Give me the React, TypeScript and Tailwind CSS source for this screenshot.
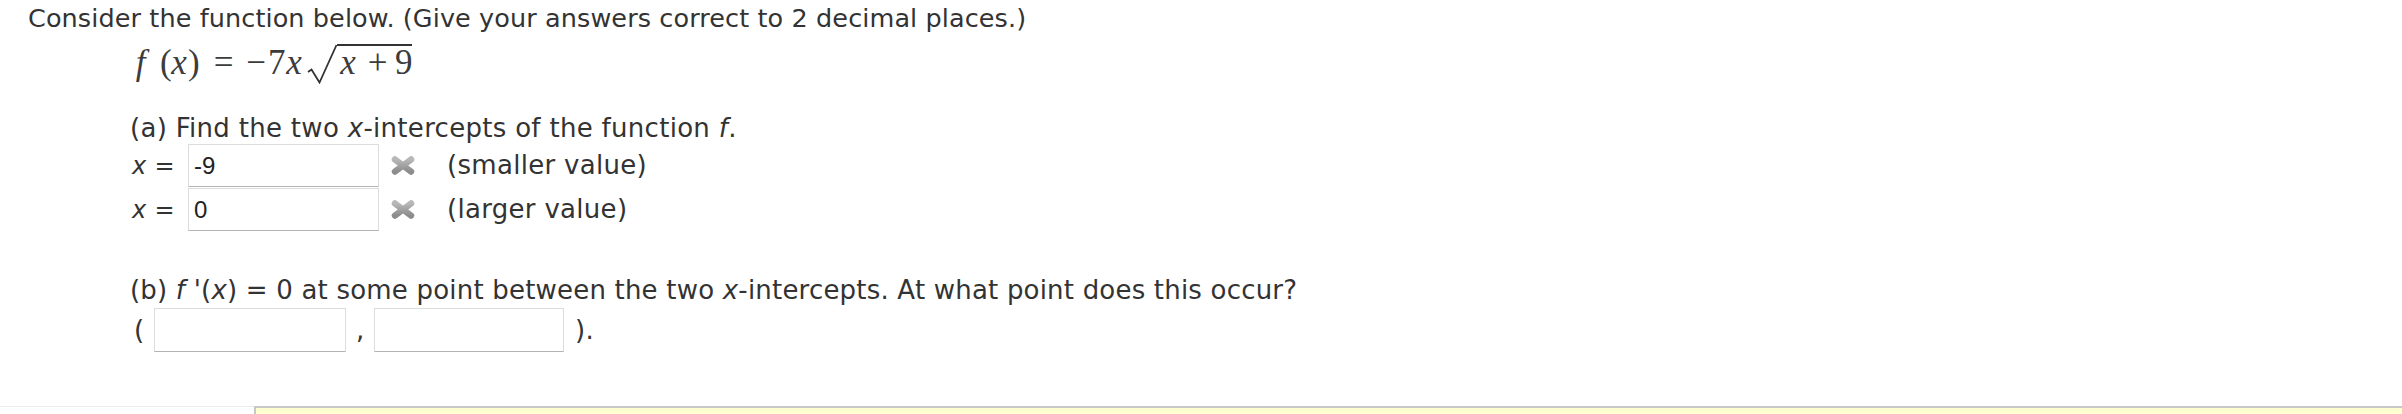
import React from 'react';

const sans = { fontFamily: 'Verdana, "DejaVu Sans", sans-serif' };

const WrongMark: React.FC = () => (
  <svg width="26" height="21" viewBox="0 0 26 21" className="block shrink-0">
    <defs>
      <linearGradient id="xg" x1="0" y1="0" x2="0" y2="1">
        <stop offset="0" stopColor="#b8b8b8" />
        <stop offset="1" stopColor="#8c8c8c" />
      </linearGradient>
    </defs>
    <path
      d="M5 4.5 L21 16.5 M21 4.5 L5 16.5"
      stroke="url(#xg)"
      strokeWidth="6.5"
      strokeLinecap="round"
      fill="none"
    />
  </svg>
);

const AnswerBox: React.FC<{ value?: string; w: string }> = ({ value, w }) => (
  <div
    className={`${w} h-full border border-[#dcdcdc] border-b-[#b4b4b4] bg-white flex items-center pl-[5px] text-[24px] tracking-normal text-[#222]`}
    style={{ fontFamily: '"Liberation Sans", Arial, sans-serif' }}
  >
    {value}
  </div>
);

// f(x) = -7x sqrt(x + 9), set glyph by glyph like the typeset image
const Formula: React.FC = () => (
  <div
    className="flex items-start h-[40px] text-[35px] leading-[34px] text-[#3c3c3c]"
    style={{ fontFamily: '"Liberation Serif", "Times New Roman", serif' }}
  >
    <span className="w-[15px] italic text-center">f</span>
    <span className="ml-[12px] w-[10px] text-center">(</span>
    <span className="w-[18px] italic text-center">x</span>
    <span className="w-[10px] text-center">)</span>
    <span className="ml-[14px] w-[23px] text-center">=</span>
    <span className="ml-[10px] w-[22px] text-center">−</span>
    <span className="ml-[1px] w-[14px] text-center">7</span>
    <span className="ml-[1px] w-[22px] italic text-center">x</span>
    <svg width="30" height="40" viewBox="0 0 30 40" className="ml-[2px] -mt-[2px] block shrink-0">
      <path
        d="M1 28 L4.5 25.5 L12.5 38.5 L29.5 1"
        stroke="#333"
        strokeWidth="1.8"
        strokeLinejoin="miter"
        fill="none"
      />
    </svg>
    <span className="-mt-[2px] border-t-2 border-[#333] w-[75px] flex items-start">
      <span className="w-[22px] italic text-center">x</span>
      <span className="ml-[7px] w-[23px] text-center">+</span>
      <span className="ml-[6px] w-[15px] text-center">9</span>
    </span>
  </div>
);

export default function App() {
  return (
    <div
      className="w-[2402px] h-[414px] bg-white text-[#333] text-[26px] tracking-[0.3px] flex flex-col overflow-hidden"
      style={sans}
    >
      <div className="h-[36px] pl-[28px] flex items-center text-[25.5px] tracking-[0.1px]">
        Consider the function below. (Give your answers correct to 2 decimal places.)
      </div>

      <div className="h-[58px] pl-[133px] pt-[10px] tracking-normal">
        <Formula />
      </div>

      <div className="mt-[18px] h-[32px] pl-[130px] flex items-center">
        <span>
          (a) Find the two <i>x</i>-intercepts of the function <i>f</i>.
        </span>
      </div>

      <div className="flex flex-col gap-[1px] pl-[132px]">
        {[
          { v: '-9', label: '(smaller value)' },
          { v: '0', label: '(larger value)' },
        ].map((r) => (
          <div key={r.label} className="h-[43px] flex items-center">
            <span className="w-[56px] text-[24px]">
              <i>x</i> =
            </span>
            <AnswerBox value={r.v} w="w-[191px]" />
            <span className="ml-[11px]">
              <WrongMark />
            </span>
            <span className="ml-[31px]">{r.label}</span>
          </div>
        ))}
      </div>

      <div className="mt-[43px] h-[32px] pl-[130px] flex items-center tracking-[0.2px]">
        <span>
          (b) <i>f</i> '(<i>x</i>) = 0 at some point between the two <i>x</i>-intercepts. At what point does
          this occur?
        </span>
      </div>

      <div className="mt-[2px] h-[44px] pl-[134px] flex items-center">
        <span className="w-[20px]">(</span>
        <AnswerBox w="w-[192px]" />
        <span className="w-[28px] pl-[10px]">,</span>
        <AnswerBox w="w-[190px]" />
        <span className="ml-[11px]">).</span>
      </div>

      <div className="mt-[54px] flex flex-1">
        <div className="w-[254px] border-t border-[#ececec]" />
        <div className="flex-1 border-t-2 border-l-2 border-[#c8c8c8] bg-[#ffffd2]" />
      </div>
    </div>
  );
}
